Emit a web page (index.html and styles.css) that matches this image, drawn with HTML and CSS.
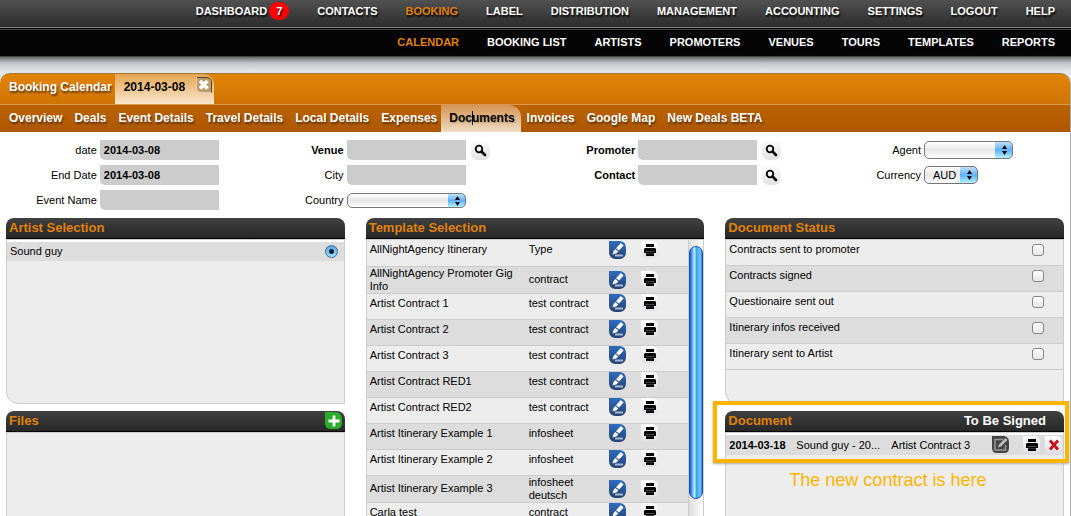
FILE: index.html
```html
<!DOCTYPE html>
<html lang="en">
<head>
<meta charset="utf-8">
<title>Booking Calendar</title>
<link rel="stylesheet" href="styles.css">
</head>
<body>
<svg class="defs" aria-hidden="true">
  <defs>
    <linearGradient id="blue" x1="0" y1="0" x2="0" y2="1"><stop offset="0" stop-color="#2f6cc0"/><stop offset="1" stop-color="#26426f"/></linearGradient>
    <linearGradient id="silver" x1="0" y1="0" x2="0" y2="1"><stop offset="0" stop-color="#fcfcfd"/><stop offset="1" stop-color="#e2e2e6"/></linearGradient>
    <symbol id="edit" viewBox="0 0 18 18">
      <path d="M0 0H11Q17 1 17 7V11Q17 17 11 18H6Q0 17 0 11Z" fill="url(#blue)"/>
      <path d="M11.800 2L14.600 4.500L10 9.500L7 7.200Z" fill="#fff"/>
      <path d="M6.300 8L9.300 10.400L7.600 12.300L3.500 13.500L4.600 10Z" fill="#fff"/>
      <path d="M6 14.500H14" stroke="#a9b9d3" stroke-width="2"/>
    </symbol>
    <symbol id="print" viewBox="0 0 18 18">
      <path d="M0 0H12Q17 1 17 6V11Q17 17 11 17H6Q0 17 0 11Z" fill="url(#silver)"/>
      <path d="M5 3H13V6H5ZM4 7H14L15 8V12H3V8ZM5 11H13V15H5Z" fill="#000"/>
      <path d="M4.500 10.500H13.500" stroke="#444"/>
      <path d="M5 12.500H13" stroke="#333"/>
    </symbol>
    <symbol id="search" viewBox="0 0 19 19">
      <path d="M0 0H13Q19 1 19 7V12Q19 19 12 19H7Q0 18 0 12Z" fill="url(#silver)"/>
      <circle cx="8" cy="8" r="3.300" fill="none" stroke="#000" stroke-width="1.800"/>
      <path d="M10.500 10.500L14 14" stroke="#000" stroke-width="2.600" stroke-linecap="round"/>
    </symbol>
  </defs>
</svg>

<header class="top">
  <nav class="nav nav-main">
    <a href="#" class="with-badge">DASHBOARD<span class="badge">7</span></a>
    <a href="#">CONTACTS</a>
    <a href="#" class="current">BOOKING</a>
    <a href="#">LABEL</a>
    <a href="#">DISTRIBUTION</a>
    <a href="#">MANAGEMENT</a>
    <a href="#">ACCOUNTING</a>
    <a href="#">SETTINGS</a>
    <a href="#">LOGOUT</a>
    <a href="#">HELP</a>
  </nav>
  <nav class="nav nav-sub">
    <a href="#" class="current">CALENDAR</a>
    <a href="#">BOOKING LIST</a>
    <a href="#">ARTISTS</a>
    <a href="#">PROMOTERS</a>
    <a href="#">VENUES</a>
    <a href="#">TOURS</a>
    <a href="#">TEMPLATES</a>
    <a href="#">REPORTS</a>
  </nav>
</header>

<main class="page">
  <nav class="tabs">
    <a href="#" class="tab">Booking Calendar</a>
    <div class="tab tab-open">
      <a href="#">2014-03-08</a>
      <button class="close" type="button" aria-label="Close tab">
        <svg viewBox="0 0 16 16"><path d="M0 0H11Q15 1 15 5V15H6Q0 15 0 11Z" fill="#c09b68"/><path d="M0 .5H11Q15.500 1 15.500 5V15.500" fill="none" stroke="#55452f"/><path d="M.5 0V11Q.5 15.500 6 15.500H15" fill="none" stroke="#dfd3c0"/><path d="M4 4L11.500 11.500M11.500 4L4 11.500" stroke="#fff" stroke-width="3.600"/></svg>
      </button>
    </div>
  </nav>
  <nav class="subtabs">
    <a href="#">Overview</a>
    <a href="#">Deals</a>
    <a href="#">Event Details</a>
    <a href="#">Travel Details</a>
    <a href="#">Local Details</a>
    <a href="#">Expenses</a>
    <a href="#" class="active">Doc<span class="caret"></span>uments</a>
    <a href="#">Invoices</a>
    <a href="#">Google Map</a>
    <a href="#">New Deals BETA</a>
  </nav>

  <form class="details">
    <div class="group">
      <div class="field"><label for="date">date</label><input id="date" type="text" value="2014-03-08"></div>
      <div class="field"><label for="end">End Date</label><input id="end" type="text" value="2014-03-08"></div>
      <div class="field"><label for="event">Event Name</label><input id="event" type="text"></div>
    </div>
    <div class="group">
      <div class="field wide"><label for="venue"><b>Venue</b></label><input id="venue" type="text"><button class="icon find" type="button" aria-label="Find venue"><svg><use href="#search"/></svg></button></div>
      <div class="field wide"><label for="city">City</label><input id="city" type="text"><span class="find"></span></div>
      <div class="field wide"><label for="country">Country</label><span class="pick full slim"><select id="country"><option></option></select><svg class="arrows" viewBox="0 0 7 10"><path d="M1 4L3.500 0L6 4ZM1 6H6L3.500 10Z"/></svg></span><span class="find"></span></div>
    </div>
    <div class="group">
      <div class="field wide"><label for="promoter"><b>Promoter</b></label><input id="promoter" type="text"><button class="icon find" type="button" aria-label="Find promoter"><svg><use href="#search"/></svg></button></div>
      <div class="field wide"><label for="contact"><b>Contact</b></label><input id="contact" type="text"><button class="icon find" type="button" aria-label="Find contact"><svg><use href="#search"/></svg></button></div>
    </div>
    <div class="group">
      <div class="field last"><label for="agent">Agent</label><span class="slot"><span class="pick mid"><select id="agent"><option></option></select><svg class="arrows" viewBox="0 0 7 10"><path d="M1 4L3.500 0L6 4ZM1 6H6L3.500 10Z"/></svg></span></span></div>
      <div class="field last"><label for="currency">Currency</label><span class="slot"><span class="pick small"><select id="currency"><option>AUD</option></select><svg class="arrows" viewBox="0 0 7 10"><path d="M1 4L3.500 0L6 4ZM1 6H6L3.500 10Z"/></svg></span></span></div>
    </div>
  </form>

  <div class="panels">
    <section class="panel round">
      <h2 class="head">Artist Selection</h2>
      <div class="body">
        <div class="pick-row"><label for="artist">Sound guy</label><input class="radio" id="artist" type="radio" checked></div>
      </div>
    </section>

    <section class="panel tall">
      <h2 class="head">Template Selection</h2>
      <div class="body scroller">
        <table class="templates">
          <colgroup><col class="c-name"><col class="c-type"><col class="c-icon"><col></colgroup>
          <tbody>
          <tr><td>AllNightAgency Itinerary</td><td>Type</td><td><button class="icon" type="button" aria-label="Edit"><svg><use href="#edit"/></svg></button></td><td><button class="icon" type="button" aria-label="Print"><svg><use href="#print"/></svg></button></td></tr>
          <tr class="double"><td>AllNightAgency Promoter Gig Info</td><td>contract</td><td><button class="icon" type="button" aria-label="Edit"><svg><use href="#edit"/></svg></button></td><td><button class="icon" type="button" aria-label="Print"><svg><use href="#print"/></svg></button></td></tr>
          <tr><td>Artist Contract 1</td><td>test contract</td><td><button class="icon" type="button" aria-label="Edit"><svg><use href="#edit"/></svg></button></td><td><button class="icon" type="button" aria-label="Print"><svg><use href="#print"/></svg></button></td></tr>
          <tr><td>Artist Contract 2</td><td>test contract</td><td><button class="icon" type="button" aria-label="Edit"><svg><use href="#edit"/></svg></button></td><td><button class="icon" type="button" aria-label="Print"><svg><use href="#print"/></svg></button></td></tr>
          <tr><td>Artist Contract 3</td><td>test contract</td><td><button class="icon" type="button" aria-label="Edit"><svg><use href="#edit"/></svg></button></td><td><button class="icon" type="button" aria-label="Print"><svg><use href="#print"/></svg></button></td></tr>
          <tr><td>Artist Contract RED1</td><td>test contract</td><td><button class="icon" type="button" aria-label="Edit"><svg><use href="#edit"/></svg></button></td><td><button class="icon" type="button" aria-label="Print"><svg><use href="#print"/></svg></button></td></tr>
          <tr><td>Artist Contract RED2</td><td>test contract</td><td><button class="icon" type="button" aria-label="Edit"><svg><use href="#edit"/></svg></button></td><td><button class="icon" type="button" aria-label="Print"><svg><use href="#print"/></svg></button></td></tr>
          <tr><td>Artist Itinerary Example 1</td><td>infosheet</td><td><button class="icon" type="button" aria-label="Edit"><svg><use href="#edit"/></svg></button></td><td><button class="icon" type="button" aria-label="Print"><svg><use href="#print"/></svg></button></td></tr>
          <tr><td>Artist Itinerary Example 2</td><td>infosheet</td><td><button class="icon" type="button" aria-label="Edit"><svg><use href="#edit"/></svg></button></td><td><button class="icon" type="button" aria-label="Print"><svg><use href="#print"/></svg></button></td></tr>
          <tr class="double"><td>Artist Itinerary Example 3</td><td>infosheet deutsch</td><td><button class="icon" type="button" aria-label="Edit"><svg><use href="#edit"/></svg></button></td><td><button class="icon" type="button" aria-label="Print"><svg><use href="#print"/></svg></button></td></tr>
          <tr><td>Carla test</td><td>contract</td><td><button class="icon" type="button" aria-label="Edit"><svg><use href="#edit"/></svg></button></td><td><button class="icon" type="button" aria-label="Print"><svg><use href="#print"/></svg></button></td></tr>
          </tbody>
        </table>
        <div class="track"><div class="thumb"></div></div>
      </div>
    </section>

    <section class="panel round">
      <h2 class="head">Document Status</h2>
      <div class="body">
        <div class="check-row"><label for="s1">Contracts sent to promoter</label><input id="s1" type="checkbox"></div>
        <div class="check-row"><label for="s2">Contracts signed</label><input id="s2" type="checkbox"></div>
        <div class="check-row"><label for="s3">Questionaire sent out</label><input id="s3" type="checkbox"></div>
        <div class="check-row"><label for="s4">Itinerary infos received</label><input id="s4" type="checkbox"></div>
        <div class="check-row"><label for="s5">Itinerary sent to Artist</label><input id="s5" type="checkbox"></div>
      </div>
    </section>

    <section class="panel">
      <div class="head"><h2>Files</h2>
        <button class="icon" type="button" aria-label="Add file"><svg viewBox="0 0 18 18"><path d="M0 0H11Q17 1 17 7V11Q17 17 11 17H6Q0 17 0 11Z" fill="#2bab2b"/><path d="M9 3.500V14.500M3.500 9H14.500" stroke="#fff" stroke-width="2.800"/></svg></button>
      </div>
      <div class="body"></div>
    </section>

    <section class="panel marked">
      <div class="head"><h2>Document</h2><span class="state">To Be Signed</span></div>
      <div class="body">
        <div class="doc-row">
          <b class="doc-date">2014-03-18</b><span class="doc-name">Sound guy - 20...</span><span class="doc-type">Artist Contract 3</span>
          <button class="icon" type="button" aria-label="Edit document"><svg viewBox="0 0 18 18"><path d="M0 0H12Q17 1 17 6V12Q17 17 12 17H5Q0 17 0 12Z" fill="#444"/><path d="M11 3.500H3V14H13.500V9" fill="none" stroke="#999" stroke-width="1.500"/><path d="M6 11.500L7 8.500L13.500 2L15.500 4L9 10.500Z" fill="#bbb"/></svg></button>
          <button class="icon doc-print" type="button" aria-label="Print document"><svg><use href="#print"/></svg></button>
          <button class="icon" type="button" aria-label="Delete document"><svg viewBox="0 0 18 18"><path d="M0 0H12Q17 1 17 6V11Q17 17 11 17H6Q0 17 0 11Z" fill="url(#silver)"/><path d="M5 4.500L13 13.500M13 4.500L5 13.500" stroke="#c3101b" stroke-width="2.800"/></svg></button>
        </div>
        <p class="note">The new contract is here</p>
      </div>
      <div class="highlight"></div>
    </section>
  </div>
</main>
</body>
</html>
```
FILE: styles.css
```css
* { box-sizing: border-box; }

body {
  margin: 0;
  height: 100vh;
  display: flex;
  flex-direction: column;
  overflow: hidden;
  background: #e4e5e8;
  color: #000;
  font: 11px/13px "Liberation Sans", Arial, sans-serif;
}

a { color: inherit; text-decoration: none; }
h2 { margin: 0; font: inherit; }
.defs { position: absolute; width: 0; height: 0; }

.icon {
  display: block;
  flex: none;
  width: 18px;
  height: 18px;
  padding: 0;
  border: 0;
  background: none;
}
.icon svg { display: block; width: 100%; height: 100%; }

/* Site navigation */
.top { flex: none; padding-bottom: 16px; background: linear-gradient(#000, #000) top / 100% 57px no-repeat, linear-gradient(#68696b 57px, #c3c4c7 63px, #e4e5e8 71px); }
.nav {
  display: flex;
  justify-content: flex-end;
  gap: 28px;
  padding-right: 16px;
  color: #fff;
  font-weight: bold;
  text-shadow: 1px 2px 2px #000;
}
.nav a { display: flex; }
.nav .current { color: #e08207; }
.nav-main { height: 28px; padding-top: 5px; background: linear-gradient(#515151, #2c2c2c); border-bottom: 1px solid #808080; }
.nav-sub { height: 28px; margin-top: 1px; padding-top: 6px; background: #050505; border-top: 1px solid #444; border-bottom: 1px solid #444; }
.badge {
  width: 20px;
  height: 18px;
  margin: -3px 0 0 2px;
  border-radius: 9px;
  background: #f00;
  line-height: 18px;
  text-align: center;
}

/* Tab bars */
.page {
  flex: 1;
  min-height: 0;
  display: flex;
  flex-direction: column;
  background: #fff;
  border-right: 1px solid #aaa;
  border-radius: 10px 10px 0 0;
}
.tabs, .subtabs {
  flex: none;
  display: flex;
  color: #fff;
  font-size: 12px;
  font-weight: bold;
  text-shadow: 1px 2px 2px #5a3000;
}
.tabs {
  height: 31px;
  padding-left: 9px;
  border-top: 1px solid #a07830;
  border-radius: 10px 10px 0 0;
  background: linear-gradient(#e08407, #d07503);
  line-height: 27px;
}
.tab-open {
  display: flex;
  margin-left: 3px;
  padding: 0 2px 0 9px;
  border-top-right-radius: 10px;
  background: linear-gradient(#e6a54f, #f8e7cf);
  color: #000;
  text-shadow: none;
}
.close { width: 16px; height: 16px; margin: 3px 0 0 11px; padding: 0; border: 0; background: none; }
.close svg { display: block; }
.subtabs {
  height: 28px;
  padding-left: 3px;
  border-top: 1px solid #d99655;
  border-bottom: 1px solid #a85a10;
  background: linear-gradient(#bd6200, #ad5800);
  line-height: 26px;
}
.subtabs a { padding: 0 6px; }
.subtabs .active {
  position: relative;
  margin-left: -2px;
  padding-left: 8px;
  margin-bottom: -1px;
  border-top-right-radius: 12px;
  background: linear-gradient(#d59452, #f0dcc5);
  color: #000;
  text-shadow: 1px 1px 1px #b99a78;
}
.caret { position: absolute; top: 6px; width: 1px; height: 14px; background: #000; }

/* Booking details */
.details { flex: none; display: grid; grid-template-columns: 219fr 271fr 292fr 289fr; padding-top: 8px; }
.group { display: flex; flex-direction: column; gap: 5px; }
.field { display: flex; align-items: center; height: 20px; }
.field label { flex: 1; padding-right: 3px; text-align: right; }
.field input {
  width: 119px;
  height: 20px;
  padding: 0 4px;
  border: 0;
  border-radius: 0 0 0 5px;
  background: #ccc;
  font: bold 11px/13px "Liberation Sans", Arial, sans-serif;
}
.find { flex: none; width: 19px; height: 19px; margin-left: 5px; }
.slot { width: 146px; }
.pick { position: relative; display: block; height: 18px; }
.pick select {
  appearance: none;
  display: block;
  width: 100%;
  height: 100%;
  padding: 0 8px;
  border: 1px solid #777;
  border-radius: 5px;
  background: linear-gradient(#c2e2fa, #5fb0f4 50%, #b5f2ff) right / 17px 100% no-repeat, linear-gradient(#fff, #e6e6e6 50%, #fff);
  font: 11px/13px "Liberation Sans", Arial, sans-serif;
  color: #000;
}
.arrows { position: absolute; right: 5px; top: 4px; width: 7px; height: 10px; pointer-events: none; }
.full { width: 119px; }
.slim { height: 15px; }
.slim .arrows { top: 3px; }
.mid { width: 89px; }
.small { width: 54px; }

/* Panels */
.panels {
  flex: 1;
  min-height: 0;
  display: grid;
  grid-template-columns: repeat(3, minmax(0, 1fr));
  grid-template-rows: auto minmax(0, 1fr);
  gap: 7px 21px;
  padding: 8px 6px 0 6px;
}
.panel { min-height: 0; display: flex; flex-direction: column; }
.tall { grid-row: span 2; }
.head {
  flex: none;
  display: flex;
  align-items: center;
  justify-content: space-between;
  height: 21px;
  padding: 0 2px 1px 3px;
  border-bottom: 1px solid #000;
  border-radius: 8px 8px 0 0;
  background: linear-gradient(#404040, #272727);
  color: #e08207;
  font-size: 13px;
  font-weight: bold;
  line-height: 18px;
}
.state { padding-right: 16px; color: #fff; }
.body { flex: 1; min-height: 0; border: 1px solid #ccc; border-bottom: 0; background: #ededed; }
.round .body { min-height: 165px; border-bottom: 1px solid #ccc; border-radius: 0 0 0 12px; }
.pick-row {
  display: flex;
  align-items: center;
  justify-content: space-between;
  height: 21px;
  padding: 0 6px 0 3px;
  border-top: 2px solid #fff;
  background: #ddd;
}
.radio {
  appearance: none;
  width: 13px;
  height: 13px;
  margin: 0;
  border: 1px solid #356c9f;
  border-radius: 50%;
  background: radial-gradient(circle, #0a2036 2px, transparent 3px), linear-gradient(#5ca2dd, #9be5ff);
}
.scroller { display: flex; overflow: hidden; }
.templates { flex: 1; align-self: flex-start; border-collapse: collapse; table-layout: fixed; }
.c-name { width: 159px; }
.c-type { width: 80px; }
.c-icon { width: 32px; }
.templates td { height: 26px; padding: 0 0 6px 3px; border-bottom: 1px solid #ccc; }
.templates td:nth-child(n+3) { padding-left: 3px; }
.templates tr:nth-child(even) { background: #ddd; }
.templates .double td { height: 27px; padding-bottom: 0; }
.track { width: 15px; padding: 6px 0 0; border-left: 1px solid #ccc; background: linear-gradient(90deg, #ddd, #fff); }
.thumb {
  height: 253px;
  border: 1px solid #1c4fb5;
  border-radius: 7px;
  background: linear-gradient(90deg, #1450d4, #62b4f8 20%, #b8ecff 38%, #3c9df2 55%, #6fd0ff 85%, #2a72cf);
}
.check-row {
  display: flex;
  align-items: flex-start;
  justify-content: space-between;
  height: 26px;
  padding: 3px 19px 0 3px;
  border-bottom: 1px solid #ccc;
}
.check-row:nth-child(even) { background: #ddd; }
.check-row input {
  appearance: none;
  width: 12px;
  height: 12px;
  margin: 1px 0 0;
  border: 1px solid #888;
  border-radius: 3px;
  background: linear-gradient(#fff, #e6e6e6);
}

/* Signed documents */
.marked { position: relative; }
.marked .body { overflow: hidden; }
.doc-row {
  display: flex;
  align-items: center;
  height: 22px;
  padding-left: 3px;
  border-top: 2px solid #fff;
  background: #ddd;
}
.doc-date { width: 67px; }
.doc-name { width: 95px; }
.doc-type { flex: 1; }
.doc-print { margin: 0 4px 0 13px; }
.note { margin: 15px 0 0 63px; color: #ffb400; font-size: 18px; line-height: 20px; }
.highlight {
  position: absolute;
  inset: -10px -5px auto -12px;
  height: 62px;
  border: 4px solid #ffb400;
  box-shadow: 0 1px 2px #aaa;
  pointer-events: none;
}
```
